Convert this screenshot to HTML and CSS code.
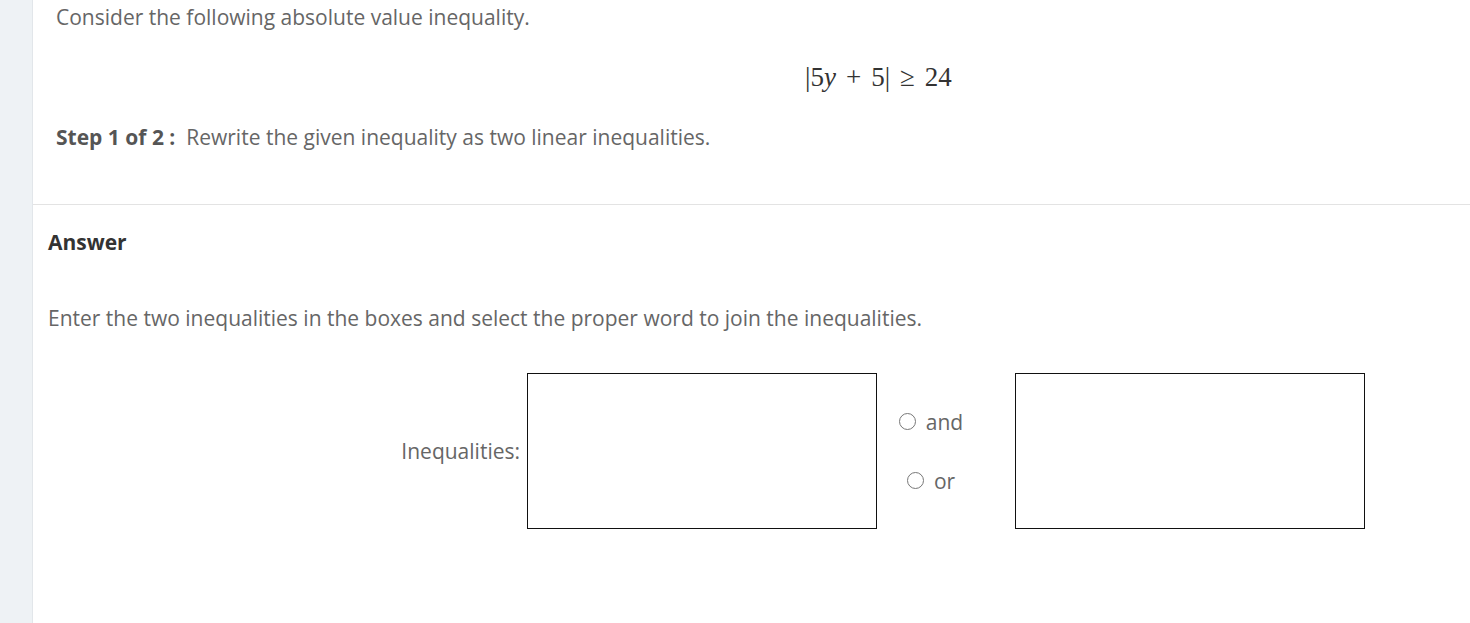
FILE: index.html
```html
<!DOCTYPE html>
<html lang="en">
<head>
  <meta charset="UTF-8">
  <meta name="viewport" content="width=device-width, initial-scale=1.0">
  <title>Absolute Value Inequality</title>
  <link rel="stylesheet" href="styles.css">
</head>
<body>
  <div class="page">
    <div class="sidebar"></div>
    <div class="main">
      <div class="question">
        <p class="intro">Consider the following absolute value inequality.</p>
        <div class="math">|5<i>y</i><span class="op">+</span>5|<span class="op">&ge;</span>24</div>
        <p class="step"><b>Step 1 of 2 :</b>&nbsp; Rewrite the given inequality as two linear inequalities.</p>
      </div>

      <div class="answer">
        <h3>Answer</h3>
        <p class="hint">Enter the two inequalities in the boxes and select the proper word to join the inequalities.</p>

        <div class="form-row">
          <label class="field-label">Inequalities:</label>
          <div class="box"></div>
          <div class="joiners">
            <label class="joiner"><span class="radio"></span>and</label>
            <label class="joiner joiner-or"><span class="radio"></span>or</label>
          </div>
          <div class="box"></div>
        </div>
      </div>
    </div>
  </div>
</body>
</html>
```

FILE: styles.css
```css
body {
  margin: 0;
  font-family: "Open Sans", Arial, sans-serif;
  color: #666;
  background: #fff;
}
.page {
  display: flex;
  min-height: 623px;
}
.sidebar {
  width: 32px;
  flex: 0 0 32px;
  background: #eef2f5;
  border-right: 1px solid #e2e6ea;
}
.main {
  flex: 1;
}
.question {
  padding: 3px 0 0 23px;
  border-bottom: 1px solid #e3e3e3;
  height: 205px;
  box-sizing: border-box;
}
.intro {
  margin: 0;
  font-size: 21px;
  line-height: 29px;
}
.math {
  font-family: "Liberation Serif", "Times New Roman", serif;
  font-size: 27px;
  color: #333;
  margin: 30px 0 0 749px;
  line-height: 30px;
}
.math .op {
  margin: 0 10px;
}
.step {
  margin: 31px 0 0;
  font-size: 21px;
  line-height: 29px;
}
.step b {
  color: #555;
}
.answer {
  padding: 23px 0 0 15px;
}
.answer h3 {
  margin: 0;
  font-size: 21px;
  line-height: 28px;
  color: #333;
  font-weight: 700;
}
.hint {
  margin: 48px 0 0;
  font-size: 21px;
  line-height: 28px;
}
.form-row {
  display: flex;
  align-items: center;
  margin-top: 41px;
}
.field-label {
  width: 472px;
  text-align: right;
  font-size: 21px;
  padding-right: 7px;
}
.box {
  width: 348px;
  height: 154px;
  border: 1px solid #111;
}
.joiners {
  width: 108px;
  padding-right: 30px;
  display: flex;
  flex-direction: column;
  align-items: center;
  gap: 31px;
}
.joiner {
  display: flex;
  align-items: center;
  gap: 10px;
  font-size: 21px;
  line-height: 28px;
}
.radio {
  width: 15px;
  height: 15px;
  border: 1.5px solid #777;
  border-radius: 50%;
  display: inline-block;
}
```
